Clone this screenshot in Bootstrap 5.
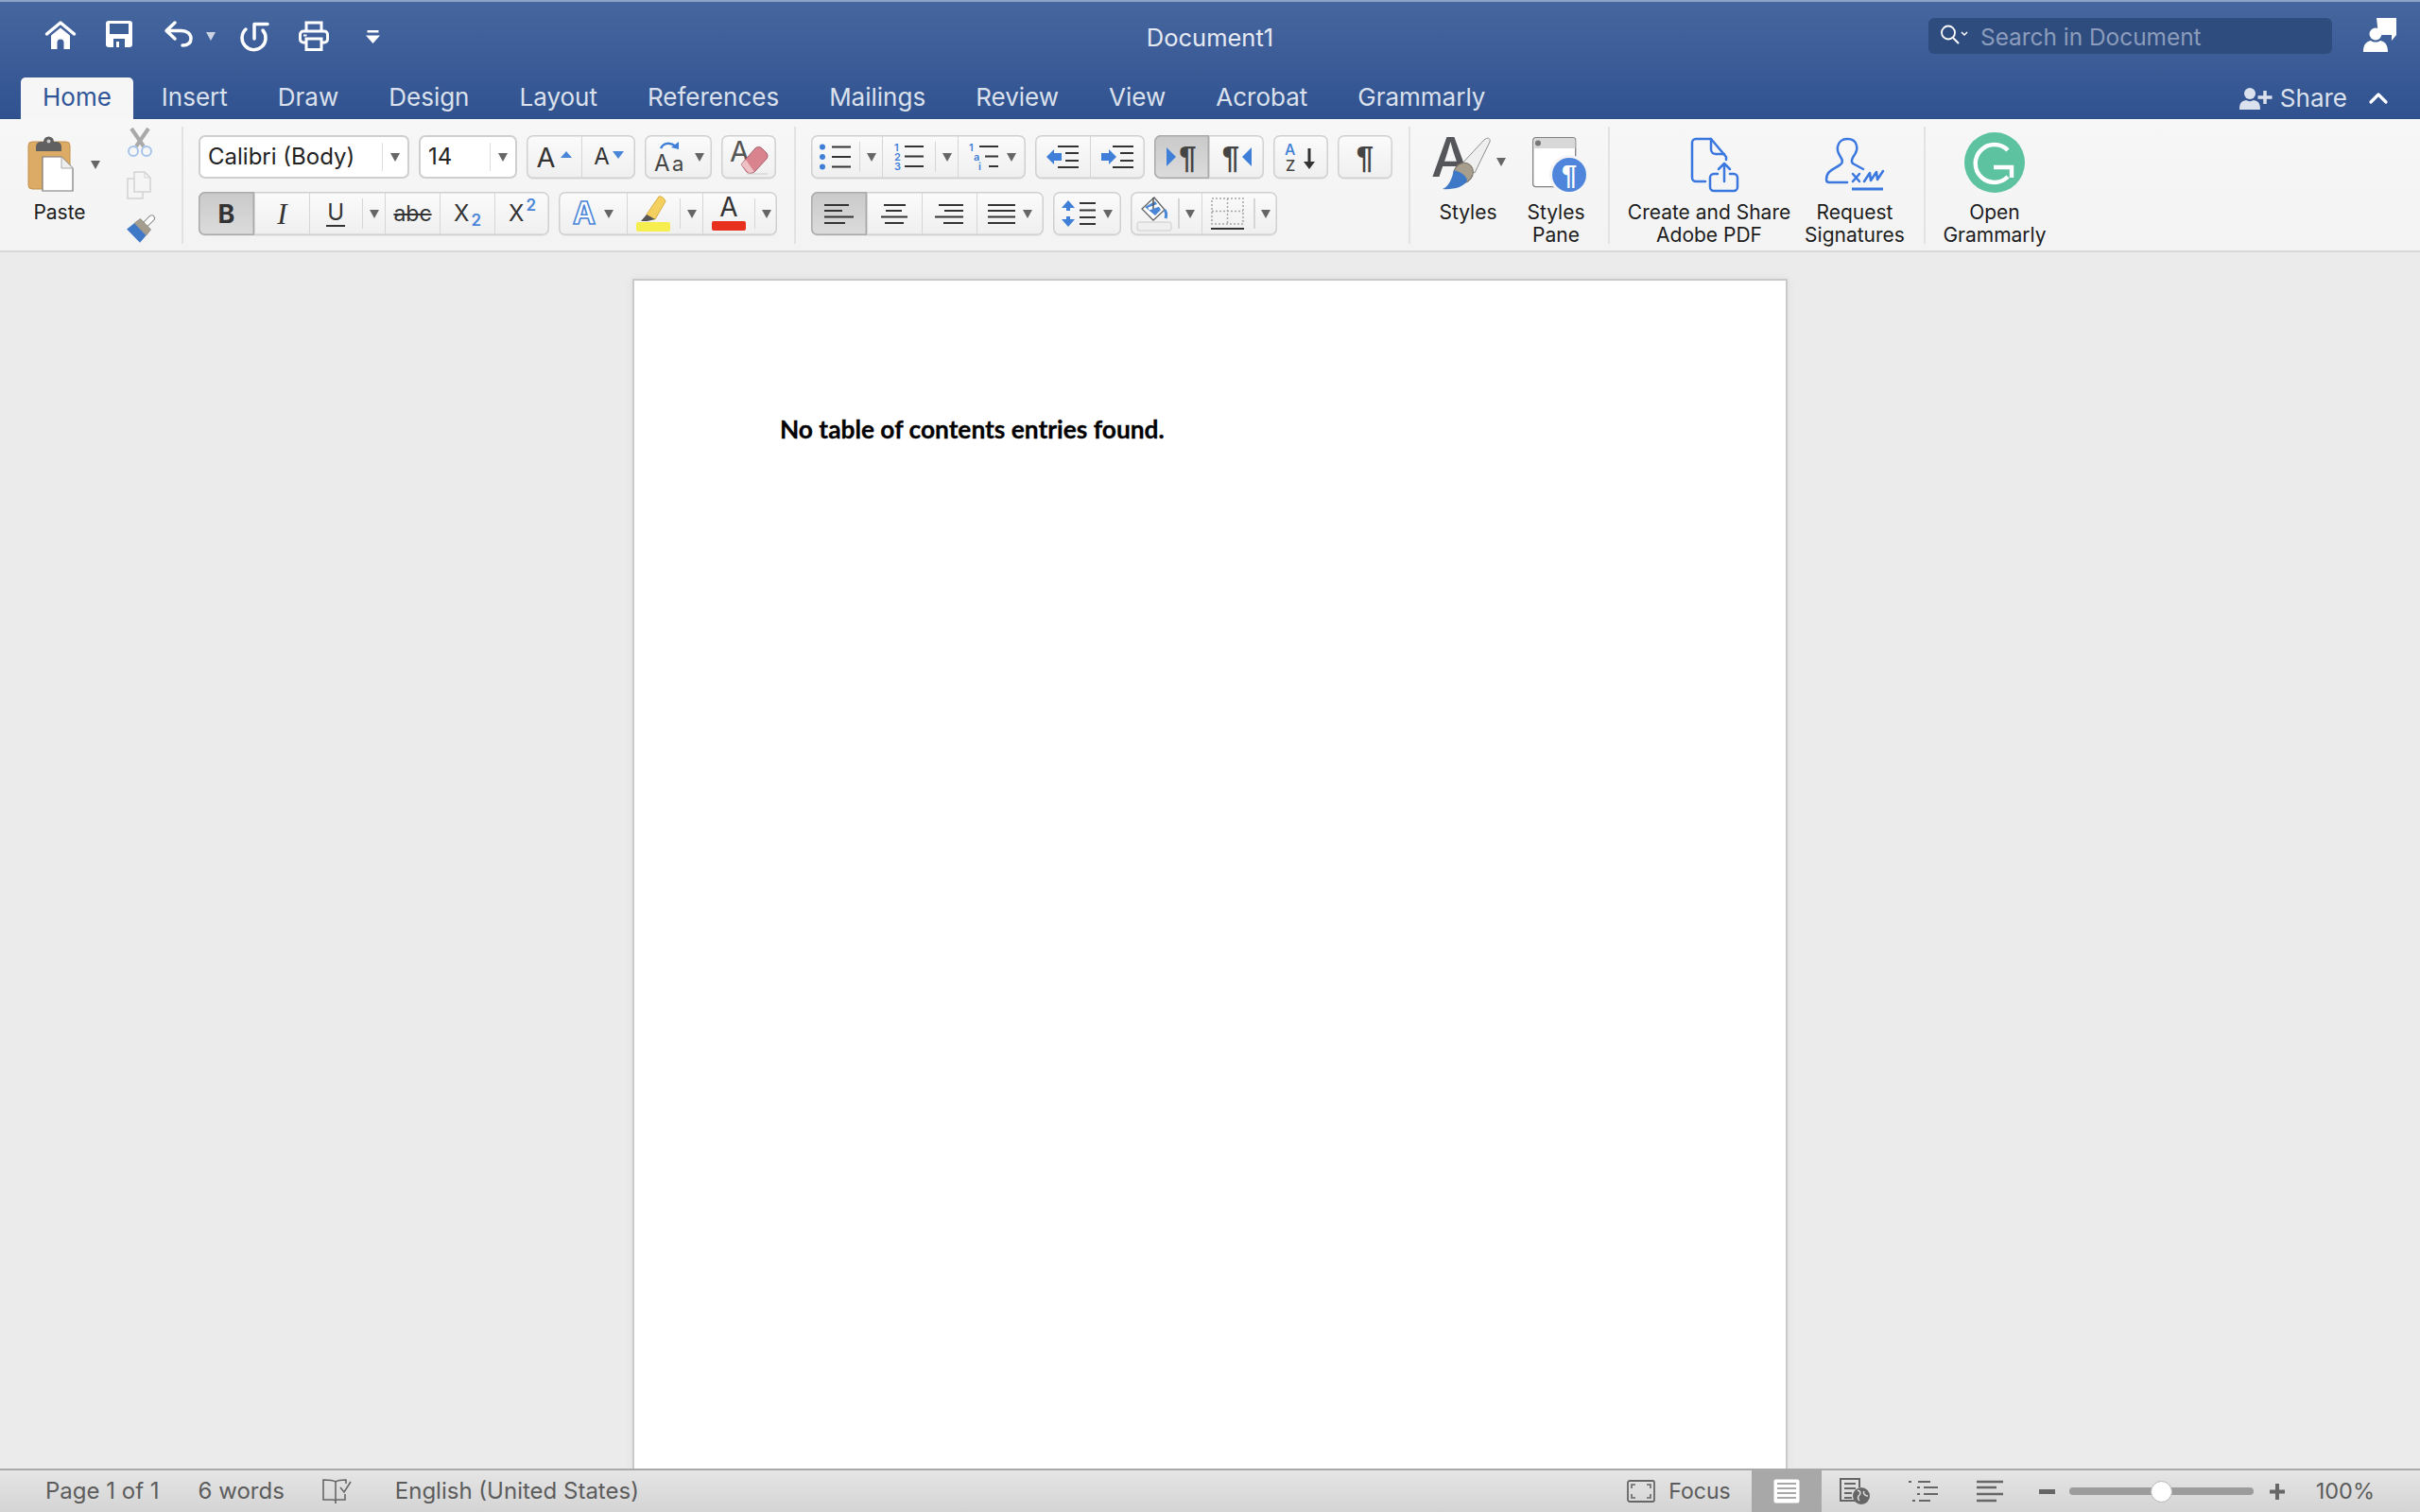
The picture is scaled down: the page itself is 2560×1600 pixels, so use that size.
<!DOCTYPE html>
<html lang="en">
<head>
  <meta charset="UTF-8">
  <title>Document1</title>
  <link href="https://cdn.jsdelivr.net/npm/bootstrap@5.3.0/dist/css/bootstrap.min.css" rel="stylesheet">
  <style>
    html, body { height: 100%; }
    body {
      font-family: Inter, "Liberation Sans", sans-serif;
      background: #ebebeb;
      overflow: hidden;
      color: #222;
    }
    svg { display: block; flex: none; overflow: visible; }

    /* title bar + tabs */
    .word-head {
      height: 126px;
      background: linear-gradient(#46669f, #30528f);
      border-top: 2px solid #8ea3c9;
      border-bottom: 1px solid #2b4b85;
    }
    .qat-row {
      height: 80px;
      display: grid;
      grid-template-columns: 1fr auto 1fr;
    }
    .qat-icons { padding: 20px 0 0 48px; }
    .qat-save { margin-left: 32px; }
    .qat-undo { margin-left: 34px; }
    .tri.qat-caret { margin-left: 14px; margin-top: 12px; border-top-color: #ccd4e4; }
    .qat-redo { margin-left: 26px; }
    .qat-print { margin-left: 32px; }
    .qat-more { margin-left: 39px; margin-top: 10px; }
    .doc-title { color: #e6eaf3; font-size: 25.5px; padding-top: 23px; line-height: 30px; }
    .qat-right { padding: 17px 25px 0 0; }
    .search-box {
      width: 427px;
      height: 38px;
      background: #2f4c7f;
      border-radius: 6px;
      padding-left: 12px;
      color: #8b9cbc;
      font-size: 24.400px;
    }
    .search-box span { margin-left: 13px; position: relative; top: 1px; }
    .comment-ico { margin-left: 33px; }

    .tab-strip { height: 44px; padding-left: 22px; }
    .tab-item {
      color: #dbe1ed;
      font-size: 26px;
      line-height: 42px;
      height: 44px;
      padding: 0 26px;
      margin-left: 1px;
    }
    .tab-item.current {
      background: #f6f6f6;
      color: #2f5597;
      border-radius: 5px 5px 0 0;
      padding: 0 23px;
      margin: 0 3px 0 0;
    }
    .share-side { margin-left: auto; padding-right: 34px; color: #dbe1ed; font-size: 26px; line-height: 40px; }
    .share-side .share-label { margin: 0 23px 0 8px; }

    /* ribbon */
    .ribbon-bar {
      height: 141px;
      background: linear-gradient(#f7f7f7, #f3f3f3);
      border-bottom: 2px solid #d8d8d8;
      padding-top: 8px;
    }
    .rb-sec { height: 124px; border-right: 2px solid #e3e3e3; flex: none; }
    .rb-sec-paste { width: 194px; padding-left: 18px; }
    .rb-sec-font { width: 648px; padding: 9px 0 0 16px; }
    .rb-sec-para { width: 650px; padding: 9px 0 0 16px; }
    .rb-sec-styles { width: 211px; padding-left: 16px; gap: 3px; }
    .rb-sec-pdf { width: 334px; padding-left: 15px; gap: 14px; }
    .rb-sec-gram { border-right: 0; padding-left: 8px; }
    .rb-row { display: flex; gap: 10px; height: 46px; margin-bottom: 14px; }

    .big-btn {
      display: flex;
      flex-direction: column;
      align-items: center;
      font-size: 21px;
      line-height: 24px;
      text-align: center;
      white-space: nowrap;
      color: #1c1c1c;
    }
    .big-ico { height: 79px; flex: none; display: flex; align-items: center; }
    .paste-btn { width: 90px; }
    .paste-btn .big-ico { padding-left: 8px; }
    .paste-caret { margin: 0 0 -2px 17px; }
    .clip-tools { margin-left: 26px; padding-top: 1px; gap: 15px; }
    .w90 { width: 90px; }
    .w180 { width: 180px; }
    .w100 { width: 100px; }
    .w130 { width: 130px; }
    .styles-caret { margin-left: 5px; margin-bottom: 4px; }
    .pane-ico { padding: 5px 0 0 10px; }
    .acro-ico { padding-top: 2px; }
    .gram-ico { padding-bottom: 3px; }

    .combo {
      height: 46px;
      background: #fff;
      border: 2px solid #cfcfcf;
      border-radius: 7px;
      font-size: 24px;
      line-height: 42px;
      padding-left: 8px;
    }
    .combo-font { width: 223px; }
    .combo-size { width: 104px; }
    .combo-rule { width: 1px; height: 30px; background: #ddd; }
    .combo-arrow { width: 26px; }

    .tb-group {
      display: grid;
      height: 46px;
      border-radius: 7px;
      background: linear-gradient(#fbfbfb, #efefef);
      box-shadow: inset 0 0 0 1.5px #d0d0d0, 0 1px 0 #e6e6e6;
    }
    .tb-btn {
      display: flex;
      align-items: center;
      justify-content: center;
      padding: 0;
      border: 0;
      border-radius: 0;
      border-left: 1.5px solid #d6d6d6;
      font-size: 24px;
      line-height: 1;
      color: #333;
      min-width: 0;
      height: 46px;
    }
    .tb-btn:first-child { border-left: 0; border-radius: 7px 0 0 7px; }
    .tb-btn:last-child { border-radius: 0 7px 7px 0; }
    .tb-btn.is-on {
      background: linear-gradient(#c9c9c9, #dcdcdc);
      box-shadow: inset 0 0 0 1.5px #aaa;
    }
    .tb-main { flex: 1; display: flex; justify-content: center; align-items: center; }
    .tb-rule { width: 1.5px; height: 32px; background: #d6d6d6; flex: none; }
    .tb-arrow { width: 23px; display: flex; justify-content: center; flex: none; }

    .g-grow { grid-template-columns: 58px 57px; }
    .g-case { grid-template-columns: 71px; }
    .g-clear { grid-template-columns: 58px; }
    .g-biu { grid-template-columns: 59px 58px 80px 58px 58px 58px; }
    .g-fx { grid-template-columns: 72px 80px 79px; }
    .g-lists { grid-template-columns: 75px 80px 72px; }
    .g-pair { grid-template-columns: 58px 58px; }
    .g-one { grid-template-columns: 58px; }
    .g-align { grid-template-columns: 58.5px 58px 58px 71px; }
    .g-space { grid-template-columns: 72px; }
    .g-shade { grid-template-columns: 75px 80px; }

    .tri { width: 0; height: 0; flex: none; border-left: 5px solid transparent; border-right: 5px solid transparent; border-top: 9px solid #666; }
    .tri-up { width: 0; height: 0; flex: none; margin-bottom: 5px; border-left: 6px solid transparent; border-right: 6px solid transparent; border-bottom: 7px solid #4a86d8; }
    .tri-dn { width: 0; height: 0; flex: none; margin-bottom: 5px; border-left: 6.5px solid transparent; border-right: 6.5px solid transparent; border-top: 8px solid #4a86d8; }
    .sp-3 { gap: 3px; }
    .sp-5 { gap: 5px; }
    .sp-8 { gap: 8px; }
    .fs-a-lg { font-size: 29px; }
    .fs-a-sm { font-size: 24px; }
    .glyph-b { font-weight: 700; font-size: 27px; }
    .glyph-i { font-family: "Liberation Serif", serif; font-style: italic; font-size: 31px; }
    .glyph-u { font-size: 24px; border-bottom: 2px solid #333; line-height: 26px; padding: 0 1px; }
    .glyph-s { font-size: 23px; text-decoration: line-through; }
    .glyph-x { font-size: 24px; }
    .sub-blue { color: #4a86d8; font-size: 17px; font-weight: 600; margin-left: 2px; position: relative; top: 7px; }
    .sup-blue { color: #4a86d8; font-size: 17px; font-weight: 600; margin-left: 2px; position: relative; top: -9px; }
    .glyph-p { font-family: "Liberation Sans", sans-serif; font-weight: 700; font-size: 33px; color: #444; }
    .svg-txt { font-family: Inter, "Liberation Sans", sans-serif; }

    /* document */
    .doc-area { flex: 1; min-height: 0; padding-top: 28px; overflow: hidden; }
    .doc-page {
      width: 1222px;
      height: 100%;
      margin: 0 auto;
      background: #fff;
      border: 2px solid #c9c9c9;
      border-bottom: 0;
      box-shadow: 0 0 10px rgba(0, 0, 0, .06);
      padding: 139px 0 0 154px;
    }
    .toc-msg {
      font-family: Lato, "Liberation Sans", sans-serif;
      font-weight: 700;
      font-size: 26.300px;
      line-height: 36px;
      color: #000;
      -webkit-text-stroke: .3px #000;
    }

    /* status bar */
    .status-bar {
      height: 46px;
      flex: none;
      border-top: 2px solid #a9a9a9;
      background: linear-gradient(#e5e5e5, #d4d4d4);
      color: #5c5c5c;
      font-size: 23px;
      padding-left: 48px;
    }
    .st-left { font-size: 24px; }
    .st-words { margin-left: 41px; }
    .st-proof { margin-left: 40px; }
    .st-lang { margin-left: 46px; }
    .st-focus { margin-left: auto; }
    .st-focus-txt { margin-left: 14px; }
    .st-tile { margin-left: 22px; width: 74px; height: 44px; background: #a8a8a8; }
    .st-web { margin-left: 19px; }
    .st-outline { margin-left: 41px; }
    .st-draft { margin-left: 41px; }
    .st-minus { margin-left: 38px; }
    .st-plus { margin-left: 0; }
    .st-pct { margin-left: 33px; margin-right: 48px; font-size: 23.500px; }
    .zoom-range {
      width: 195px;
      height: 24px;
      margin: 0 17px 0 15px;
      padding: 0;
    }
    .zoom-range::-webkit-slider-runnable-track { height: 8px; background: #9c9c9c; border-radius: 4px; }
    .zoom-range::-webkit-slider-thumb {
      width: 23px;
      height: 23px;
      margin-top: -7.5px;
      background: #fff;
      border: 1px solid #b5b5b5;
      border-radius: 50%;
    }
  </style>
</head>
<body class="d-flex flex-column">

  <header class="word-head flex-none">
    <div class="qat-row">
      <div class="qat-icons d-flex align-items-start">
        <svg width="32" height="30" viewBox="0 0 32 30"><path d="M1.500 14 16 2l14.500 12" fill="none" stroke="#fff" stroke-width="3.500" stroke-linecap="round" stroke-linejoin="round"/><path d="M6 15.500 16 7.500l10 8V30h-6.500v-7a3.500 3.500 0 0 0-7 0v7H6z" fill="#fff"/></svg>
        <svg class="qat-save" width="28" height="28" viewBox="0 0 28 28"><path d="M3 0h22a3 3 0 0 1 3 3v22a3 3 0 0 1-3 3H3a3 3 0 0 1-3-3V3a3 3 0 0 1 3-3z" fill="#fff"/><rect x="4" y="3" width="20" height="11" fill="#3e6099"/><rect x="8" y="19" width="12" height="9" fill="#3e6099"/><rect x="11" y="22" width="3" height="6" fill="#fff"/></svg>
        <svg class="qat-undo" width="30" height="28" viewBox="0 0 30 28"><path d="M11 2 2 10.500l9 8.500M3 10.500h15c6 0 10 3.500 10 8s-3 7.500-9 7.500" fill="none" stroke="#fff" stroke-width="3.500" stroke-linecap="round" stroke-linejoin="round"/></svg>
        <div class="tri qat-caret"></div>
        <svg class="qat-redo" width="30" height="30" viewBox="0 0 30 30"><path d="M6 9a12.500 12.500 0 1 0 18 1M15 19V3.500h14" fill="none" stroke="#fff" stroke-width="3.500" stroke-linecap="round" stroke-linejoin="round"/></svg>
        <svg class="qat-print" width="32" height="32" viewBox="0 0 32 32"><path d="M8 11V2h16v9" fill="none" stroke="#fff" stroke-width="3"/><path d="M8 23H5a3.500 3.500 0 0 1-3.500-3.500v-5A3.500 3.500 0 0 1 5 11h22a3.500 3.500 0 0 1 3.500 3.500v5A3.500 3.500 0 0 1 27 23h-3" fill="none" stroke="#fff" stroke-width="3"/><rect x="8" y="19" width="16" height="11.500" fill="#3e6099" stroke="#fff" stroke-width="3"/><rect x="5" y="14.500" width="3.500" height="2" fill="#fff"/></svg>
        <svg class="qat-more" width="15" height="14" viewBox="0 0 15 14"><rect x="1.500" width="12" height="2.500" fill="#fff"/><path d="M0 5.500h15L7.500 14z" fill="#fff"/></svg>
      </div>
      <div class="doc-title">Document1</div>
      <div class="qat-right d-flex justify-content-end align-items-start">
        <div class="search-box d-flex align-items-center">
          <svg width="30" height="26" viewBox="0 0 30 26"><circle cx="9" cy="9.500" r="7" fill="none" stroke="#fff" stroke-width="1.800"/><path d="m14 15 6 6" stroke="#fff" stroke-width="2"/><path d="m23 9 3 3 3-3" fill="none" stroke="#fff" stroke-width="1.500"/></svg>
          <span>Search in Document</span>
        </div>
        <svg class="comment-ico" width="35" height="36" viewBox="0 0 35 36"><path d="M14 0h21v18l-5 6v-6H16z" fill="#fff"/><circle cx="13" cy="17" r="6.500" fill="#fff"/><path d="M0 36c0-8 3-11 8-12 3 2 7 2 10 0 5 1 8 4 8 12z" fill="#fff"/></svg>
      </div>
    </div>
    <div class="tab-strip d-flex">
      <div class="tab-item current">Home</div>
      <div class="tab-item">Insert</div>
      <div class="tab-item">Draw</div>
      <div class="tab-item">Design</div>
      <div class="tab-item">Layout</div>
      <div class="tab-item">References</div>
      <div class="tab-item">Mailings</div>
      <div class="tab-item">Review</div>
      <div class="tab-item">View</div>
      <div class="tab-item">Acrobat</div>
      <div class="tab-item">Grammarly</div>
      <div class="share-side d-flex align-items-center">
        <svg width="35" height="24" viewBox="0 0 35 24"><circle cx="11" cy="7" r="6" fill="#dbe1ed"/><path d="M0 24c0-7 2-9 7-10 2.500 1.500 5.500 1.500 8 0 5 1 7 3 7 10z" fill="#dbe1ed"/><path d="M27 4v14M19.500 11h15" stroke="#dbe1ed" stroke-width="3.500"/></svg>
        <span class="share-label">Share</span>
        <svg width="20" height="12" viewBox="0 0 20 12"><path d="m2 10 8-8 8 8" fill="none" stroke="#fff" stroke-width="3.200" stroke-linecap="round" stroke-linejoin="round"/></svg>
      </div>
    </div>
  </header>

  <section class="ribbon-bar d-flex flex-none">
    <!-- clipboard -->
    <div class="rb-sec rb-sec-paste d-flex">
      <div class="big-btn paste-btn">
        <div class="big-ico">
          <svg width="50" height="60" viewBox="0 0 50 60"><rect x="1" y="6" width="44" height="50" rx="4" fill="#dcab66" stroke="#c2924f"/><path d="M9 16v-5a5 5 0 0 1 5-5h3a5.500 5.500 0 0 1 11 0h3a5 5 0 0 1 5 5v5z" fill="#606060"/><circle cx="22.500" cy="5.500" r="2" fill="#c9c9c9"/><path d="M16 22h20l12 12v24H16z" fill="#fff" stroke="#777" stroke-width="1.200"/><path d="M36 22v12h12z" fill="#eee" stroke="#aaa"/></svg>
          <div class="tri paste-caret"></div>
        </div>
        <div>Paste</div>
      </div>
      <div class="clip-tools d-flex flex-column">
        <svg width="28" height="31" viewBox="0 0 28 31"><path d="M5 1l13 19M23 1 10 20" stroke="#a9a9a9" stroke-width="4"/><circle cx="7" cy="25" r="5" fill="#f6f6f6" stroke="#a8c3e8" stroke-width="2"/><circle cx="21" cy="25" r="5" fill="#f6f6f6" stroke="#a8c3e8" stroke-width="2"/></svg>
        <svg width="26" height="30" viewBox="0 0 26 30"><path d="M8 8H1v21h16v-7" fill="none" stroke="#d2d2d2" stroke-width="1.500"/><path d="M8 1h11l6 6v15H8z" fill="none" stroke="#d2d2d2" stroke-width="1.500"/><path d="M19 1v6h6" fill="none" stroke="#d2d2d2"/></svg>
        <svg width="32" height="29" viewBox="0 0 32 29"><g transform="translate(15 16) rotate(46)"><rect x="-3" y="-19" width="6" height="14" rx="3" fill="#fff" stroke="#8f8f8f"/><path d="M-8-7H8l1 8H-9z" fill="#a59c8d" stroke="#777" stroke-width=".6"/><path d="M-9 1H9l1 10H-10z" fill="#3f78c6"/></g></svg>
      </div>
    </div>

    <!-- font -->
    <div class="rb-sec rb-sec-font">
      <div class="rb-row">
        <div class="combo combo-font d-flex justify-content-between align-items-center">
          <span>Calibri (Body)</span>
          <div class="d-flex align-items-center"><div class="combo-rule"></div><div class="combo-arrow d-flex justify-content-center"><div class="tri"></div></div></div>
        </div>
        <div class="combo combo-size d-flex justify-content-between align-items-center">
          <span>14</span>
          <div class="d-flex align-items-center"><div class="combo-rule"></div><div class="combo-arrow d-flex justify-content-center"><div class="tri"></div></div></div>
        </div>
        <div class="tb-group g-grow">
          <button class="btn tb-btn sp-5"><span class="fs-a-lg">A</span><span class="tri-up"></span></button>
          <button class="btn tb-btn sp-3"><span class="fs-a-sm">A</span><span class="tri-dn"></span></button>
        </div>
        <div class="tb-group g-case">
          <button class="btn tb-btn sp-8">
            <svg width="36" height="36" viewBox="0 0 36 36"><path d="M8 9C11 3 18 2 24 7" fill="none" stroke="#3f7fd8" stroke-width="2.500"/><path d="m19 8 8 2 0-8z" fill="#3f7fd8"/><text class="svg-txt" x="1" y="33" font-size="24" fill="#444">A</text><text class="svg-txt" x="20" y="33" font-size="22" fill="#444">a</text></svg>
            <span class="tri"></span>
          </button>
        </div>
        <div class="tb-group g-clear">
          <button class="btn tb-btn">
            <svg width="44" height="38" viewBox="0 0 44 38"><text class="svg-txt" x="2" y="24" font-size="30" fill="#555">A</text><path d="M14 27 29 10a5 5 0 0 1 7 0l5 5a5 5 0 0 1 0 6L28 35c-3 2-6 2-8 0z" fill="#d9838f" stroke="#a95f6b"/><path d="M14 27l8 9 6-1-9-13z" fill="#eec1c6"/><path d="M20 37h22" stroke="#ccc"/></svg>
          </button>
        </div>
      </div>
      <div class="rb-row">
        <div class="tb-group g-biu">
          <button class="btn tb-btn is-on"><span class="glyph-b">B</span></button>
          <button class="btn tb-btn"><span class="glyph-i">I</span></button>
          <button class="btn tb-btn"><div class="tb-main"><span class="glyph-u">U</span></div><div class="tb-rule"></div><div class="tb-arrow"><div class="tri"></div></div></button>
          <button class="btn tb-btn"><span class="glyph-s">abc</span></button>
          <button class="btn tb-btn"><span class="glyph-x">X</span><span class="sub-blue">2</span></button>
          <button class="btn tb-btn"><span class="glyph-x">X</span><span class="sup-blue">2</span></button>
        </div>
        <div class="tb-group g-fx">
          <button class="btn tb-btn sp-8">
            <svg width="26" height="28" viewBox="0 0 26 28"><text class="svg-txt" x="13" y="25" text-anchor="middle" font-size="32" font-weight="700" fill="#fff" stroke="#4a86d8" stroke-width="1.600">A</text></svg>
            <span class="tri"></span>
          </button>
          <button class="btn tb-btn">
            <div class="tb-main">
              <svg width="38" height="38" viewBox="0 0 38 38"><path d="M12 20 25 1c2-1 6 2 7 5L21 25l-7-1z" fill="#f4d05f" stroke="#d8aa3c"/><path d="M12 20l9 5-8 2H6z" fill="#555"/><rect x="1" y="28" width="36" height="10" rx="2" fill="#f6ee4e"/></svg>
            </div>
            <div class="tb-rule"></div><div class="tb-arrow"><div class="tri"></div></div>
          </button>
          <button class="btn tb-btn">
            <div class="tb-main">
              <svg width="36" height="36" viewBox="0 0 36 36"><text class="svg-txt" x="18" y="21" text-anchor="middle" font-size="28" fill="#333">A</text><rect y="26" width="36" height="10" rx="2" fill="#e8301f"/></svg>
            </div>
            <div class="tb-rule"></div><div class="tb-arrow"><div class="tri"></div></div>
          </button>
        </div>
      </div>
    </div>

    <!-- paragraph -->
    <div class="rb-sec rb-sec-para">
      <div class="rb-row">
        <div class="tb-group g-lists">
          <button class="btn tb-btn">
            <div class="tb-main"><svg width="33" height="28" viewBox="0 0 33 28"><g fill="#3f7fd8"><circle cx="3" cy="3.500" r="3"/><circle cx="3" cy="14" r="3"/><circle cx="3" cy="24.500" r="3"/></g><path d="M13 3.500h20M13 14h20M13 24.500h20" stroke="#333" stroke-width="2"/></svg></div>
            <div class="tb-rule"></div><div class="tb-arrow"><div class="tri"></div></div>
          </button>
          <button class="btn tb-btn">
            <div class="tb-main"><svg width="31" height="30" viewBox="0 0 31 30"><g class="svg-txt" fill="#3f7fd8" font-size="11" font-weight="600"><text x="0" y="9">1</text><text x="0" y="19">2</text><text x="0" y="29">3</text></g><path d="M11 4h20M11 14.500h20M11 25h20" stroke="#333" stroke-width="2"/></svg></div>
            <div class="tb-rule"></div><div class="tb-arrow"><div class="tri"></div></div>
          </button>
          <button class="btn tb-btn sp-8">
            <svg width="32" height="30" viewBox="0 0 32 30"><g class="svg-txt" fill="#3f7fd8" font-size="11" font-weight="600"><text x="0" y="9">1</text><text x="5" y="19">a</text><text x="10" y="29">i</text></g><path d="M11 4h20M17 14.500h14M21 25h10" stroke="#333" stroke-width="2"/></svg>
            <span class="tri"></span>
          </button>
        </div>
        <div class="tb-group g-pair">
          <button class="btn tb-btn"><svg width="35" height="26" viewBox="0 0 35 26"><path d="M0 13 8 5v4h8v8H8v4z" fill="#3f7fd8"/><path d="M12 2h22M20 9h14M20 17h14M12 24h22" stroke="#333" stroke-width="2"/></svg></button>
          <button class="btn tb-btn"><svg width="35" height="26" viewBox="0 0 35 26"><path d="M16 13 8 5v4H0v8h8v4z" fill="#3f7fd8"/><path d="M12 2h22M20 9h14M20 17h14M12 24h22" stroke="#333" stroke-width="2"/></svg></button>
        </div>
        <div class="tb-group g-pair">
          <button class="btn tb-btn is-on sp-3"><svg width="10" height="24" viewBox="0 0 10 24"><path d="M0 2 10 12 0 22z" fill="#3f7fd8"/></svg><span class="glyph-p">¶</span></button>
          <button class="btn tb-btn sp-3"><span class="glyph-p">¶</span><svg width="10" height="24" viewBox="0 0 10 24"><path d="M10 2 0 12l10 10z" fill="#3f7fd8"/></svg></button>
        </div>
        <div class="tb-group g-one">
          <button class="btn tb-btn">
            <svg width="35" height="30" viewBox="0 0 35 30"><text class="svg-txt" x="0" y="13" font-size="16" font-weight="500" fill="#3f7fd8">A</text><text class="svg-txt" x="1" y="30" font-size="16" font-weight="500" fill="#444">Z</text><path d="M26 6v16" stroke="#333" stroke-width="3"/><path d="m20 20 6 8 6-8z" fill="#333"/></svg>
          </button>
        </div>
        <div class="tb-group g-one">
          <button class="btn tb-btn"><span class="glyph-p">¶</span></button>
        </div>
      </div>
      <div class="rb-row">
        <div class="tb-group g-align">
          <button class="btn tb-btn is-on"><svg width="31" height="21" viewBox="0 0 31 21"><path d="M0 1h26M0 7h19M0 13.500h31M0 20h22" stroke="#333" stroke-width="2"/></svg></button>
          <button class="btn tb-btn"><svg width="28" height="21" viewBox="0 0 28 21"><path d="M3 1h23M5 7h17M0 13.500h28M4 20h20" stroke="#333" stroke-width="2"/></svg></button>
          <button class="btn tb-btn"><svg width="30" height="21" viewBox="0 0 30 21"><path d="M4 1h26M10 7h20M0 13.500h30M9 20h21" stroke="#333" stroke-width="2"/></svg></button>
          <button class="btn tb-btn sp-8"><svg width="29" height="21" viewBox="0 0 29 21"><path d="M0 1h29M0 7h29M0 13.500h29M0 20h29" stroke="#333" stroke-width="2"/></svg><span class="tri"></span></button>
        </div>
        <div class="tb-group g-space">
          <button class="btn tb-btn sp-8"><svg width="36" height="28" viewBox="0 0 36 28"><path d="M7 0l7 8H9v3H5V8H0zM7 28 0 20h5v-3h4v3h5z" fill="#3f7fd8"/><path d="M19 3h17M19 10.500h17M19 18h17M19 25h17" stroke="#333" stroke-width="2"/></svg><span class="tri"></span></button>
        </div>
        <div class="tb-group g-shade">
          <button class="btn tb-btn">
            <div class="tb-main"><svg width="38" height="38" viewBox="0 0 38 38"><path d="M6 14 19 2l11 13-12 11z" fill="#fff" stroke="#666" stroke-width="1.300"/><path d="M9 12 20 6l6 9-6 6z" fill="#4a86d8"/><path d="M13 14 24 10" stroke="#fff" stroke-width="3"/><path d="M18 2v12" stroke="#555" stroke-width="1.500"/><path d="M30 15c2 3 2 6 1 9" fill="none" stroke="#4a86d8" stroke-width="3"/><rect x="1" y="28" width="36" height="9" rx="2" fill="#efefef" stroke="#ccc"/></svg></div>
            <div class="tb-rule"></div><div class="tb-arrow"><div class="tri"></div></div>
          </button>
          <button class="btn tb-btn">
            <div class="tb-main"><svg width="35" height="34" viewBox="0 0 35 34"><path d="M1 1h33v27H1zM17.500 1v27M1 14.500h33" fill="none" stroke="#a6a6a6" stroke-width="1.500" stroke-dasharray="2 2"/><path d="M0 33h35" stroke="#333" stroke-width="2"/></svg></div>
            <div class="tb-rule"></div><div class="tb-arrow"><div class="tri"></div></div>
          </button>
        </div>
      </div>
    </div>

    <!-- styles -->
    <div class="rb-sec rb-sec-styles d-flex">
      <div class="big-btn w90">
        <div class="big-ico">
          <svg width="64" height="58" viewBox="0 0 64 58"><text class="svg-txt" x="0" y="42" font-size="58" font-weight="500" fill="#55565a">A</text><path d="M30 31 56 3c3-3 7-2 6 2L46 38z" fill="#efefef" stroke="#8f8f8f" stroke-width="1"/><ellipse cx="34" cy="38" rx="10" ry="11" transform="rotate(38 34 38)" fill="#a79e8e" stroke="#7b7468"/><path d="M24 35c8 2 14 7 14 11-3 7-15 10-26 9 7-3 10-11 12-20z" fill="#3f78c6"/></svg>
          <div class="tri styles-caret"></div>
        </div>
        <div>Styles</div>
      </div>
      <div class="big-btn w90">
        <div class="big-ico pane-ico">
          <svg width="60" height="62" viewBox="0 0 60 62"><rect x=".7" y=".7" width="45" height="52" rx="3" fill="#fff" stroke="#808080" stroke-width="1.300"/><path d="M1.500 4a2.500 2.500 0 0 1 2.500-3h39a2.500 2.500 0 0 1 2.500 3v8h-44z" fill="#d8d8d8"/><circle cx="6" cy="6.500" r="3" fill="#777"/><circle cx="39" cy="40" r="21" fill="#f5f5f5"/><circle cx="39" cy="40" r="18" fill="#4f86dc"/><text x="39" y="50" text-anchor="middle" font-family="Liberation Sans" font-weight="700" font-size="29" fill="#fff">¶</text></svg>
        </div>
        <div>Styles<br>Pane</div>
      </div>
    </div>

    <!-- acrobat -->
    <div class="rb-sec rb-sec-pdf d-flex">
      <div class="big-btn w180">
        <div class="big-ico acro-ico">
          <svg width="62" height="57" viewBox="-12 0 62 57"><g fill="none" stroke="#3a78e0" stroke-width="2.500" stroke-linecap="round" stroke-linejoin="round"><path d="M15 46H5a4 4 0 0 1-4-4V5a4 4 0 0 1 4-4h16l16 19v3"/><path d="M21 1v11a5 5 0 0 0 5 5h9"/><path d="M28 38h-4a4 4 0 0 0-4 4v10a4 4 0 0 0 4 4h21a4 4 0 0 0 4-4V42a4 4 0 0 0-4-4h-4"/><path d="M35 46V28M29 33l6-6 6 6"/></g></svg>
        </div>
        <div>Create and Share<br>Adobe PDF</div>
      </div>
      <div class="big-btn w100">
        <div class="big-ico acro-ico">
          <svg width="64" height="57" viewBox="0 0 64 57"><g fill="none" stroke="#3a78e0" stroke-width="2.500" stroke-linecap="round" stroke-linejoin="round"><path d="M41 33 30 27c-2-2-1-5 1-8 3-4 4-7 3-11C33 3 29 1 24 1s-9 3-10 8c-1 4 1 8 3 11s3 6 0 8C11 33 2 34 2 44c0 2 1 3 3 3h19"/><path d="M30 38l7 8M37 38l-7 8"/><path d="M42 46l6-9 1 8 6-9 1 8 6-9"/></g><path d="M29 54h33" stroke="#3a78e0" stroke-width="3"/></svg>
        </div>
        <div>Request<br>Signatures</div>
      </div>
    </div>

    <!-- grammarly -->
    <div class="rb-sec rb-sec-gram d-flex">
      <div class="big-btn w130">
        <div class="big-ico gram-ico">
          <svg width="64" height="64" viewBox="0 0 64 64"><circle cx="32" cy="32" r="32" fill="#5cc2a0"/><path d="M46 19A20 20 0 1 0 46 47M31 37h19v11" fill="none" stroke="#fff" stroke-width="4.500"/></svg>
        </div>
        <div>Open<br>Grammarly</div>
      </div>
    </div>
  </section>

  <main class="doc-area">
    <div class="doc-page">
      <div class="toc-msg">No table of contents entries found.</div>
    </div>
  </main>

  <footer class="status-bar d-flex align-items-center">
    <span class="st-left">Page 1 of 1</span>
    <span class="st-left st-words">6 words</span>
    <svg class="st-proof" width="31" height="27" viewBox="0 0 31 27"><path d="M14 3C11 1 5 1 1 1v21h10c2 0 3 1 3 2M14 3v23M14 3c3-2 8-2 11-2v4M14 22h10v-6" fill="none" stroke="#666" stroke-width="1.600"/><path d="m19 9 4 5 7-11" fill="none" stroke="#666" stroke-width="1.600"/></svg>
    <span class="st-left st-lang">English (United States)</span>

    <svg class="st-focus" width="30" height="24" viewBox="0 0 30 24"><rect x="1" y="1" width="28" height="22" rx="2" fill="none" stroke="#666" stroke-width="1.800"/><path d="M5 9V5h4M21 5h4v4M25 15v4h-4M9 19H5v-4" fill="none" stroke="#666" stroke-width="1.600"/></svg>
    <span class="st-focus-txt">Focus</span>
    <div class="st-tile d-flex justify-content-center align-items-center">
      <svg width="28" height="26" viewBox="0 0 28 26"><rect x=".5" y=".5" width="27" height="25" rx="2" fill="#fff"/><path d="M4 5h20M4 10h20M4 15h20M4 20h20" stroke="#a8a8a8" stroke-width="2.200"/></svg>
    </div>
    <svg class="st-web" width="32" height="28" viewBox="0 0 32 28"><path d="M16 24H1V1h20v9" fill="none" stroke="#666" stroke-width="2"/><path d="M5 6h12M5 11h12M5 16h8M5 21h8" stroke="#666" stroke-width="2"/><circle cx="23" cy="19" r="9" fill="#666"/><path d="M19 13c3 1 4 3 2 5s-2 4 0 6M26 14c-2 3 2 5 4 5" fill="none" stroke="#dcdcdc" stroke-width="1.500"/></svg>
    <svg class="st-outline" width="31" height="24" viewBox="0 0 31 24"><path d="M0 2h3M10 2h13M9 8h3M16 8h15M9 15h3M16 15h15M4 22h3M11 22h12" stroke="#666" stroke-width="2.200"/></svg>
    <svg class="st-draft" width="28" height="24" viewBox="0 0 28 24"><path d="M0 2h28M0 8h21M0 15h28M0 22h21" stroke="#666" stroke-width="2.400"/></svg>
    <svg class="st-minus" width="17" height="5" viewBox="0 0 17 5"><rect width="17" height="5" fill="#666"/></svg>
    <input class="form-range zoom-range" type="range" min="0" max="100" value="50">
    <svg class="st-plus" width="16" height="17" viewBox="0 0 16 17"><path d="M8 0v17M0 8.500h16" stroke="#666" stroke-width="4"/></svg>
    <span class="st-pct">100%</span>
  </footer>

  <script src="https://cdn.jsdelivr.net/npm/bootstrap@5.3.0/dist/js/bootstrap.bundle.min.js"></script>
</body>
</html>
